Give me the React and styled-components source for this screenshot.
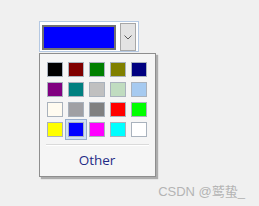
import styled, { createGlobalStyle } from 'styled-components';

const GlobalStyle = createGlobalStyle`
   html, body {
      margin: 0;
      padding: 0;
      background-color: #f0f0f0;
      font-family: 'Open Sans', 'Noto Sans', sans-serif;
   }
`;

const PageStyle = styled.div`
   position: relative;
   width: 259px;
   height: 206px;
   padding: 21px 0 0 39px;
   box-sizing: border-box;
`;

const ComboStyle = styled.div`
   width: 100px;
   height: 31px;
   box-sizing: border-box;
   border: 1px solid #b4c8e2;
   background-color: #ffffff;
   display: flex;
   align-items: center;
   padding: 1px 2px 0 2px;
   gap: 4px;
`;

const ComboSwatchStyle = styled.div`
   width: 75px;
   height: 25px;
   box-sizing: border-box;
   border: 2px solid #727272;
   background-color: ${(props) => props.$color};
`;

const ComboButtonStyle = styled.div`
   width: 16px;
   height: 28px;
   box-sizing: border-box;
   border: 1px solid #a7a7a7;
   background-color: #e3e3e3;
   display: flex;
   align-items: center;
   justify-content: center;
`;

const PopupStyle = styled.div`
   margin-top: 1px;
   width: 117px;
   height: 124px;
   box-sizing: border-box;
   border: 1px solid #8e8e8e;
   background-color: #f5f5f5;
   box-shadow: 2px 2px 1px rgba(0, 0, 0, 0.28);
   padding: 8px 8px 0 7px;
   display: flex;
   flex-direction: column;
`;

const GridStyle = styled.div`
   display: grid;
   grid-template-columns: repeat(5, 16px);
   grid-auto-rows: 15px;
   column-gap: 5px;
   row-gap: 5px;
`;

const CellStyle = styled.div`
   width: 16px;
   height: 15px;
   box-sizing: border-box;
   border: 1px solid #a9b2bd;
   background-color: ${(props) => props.$color};
   ${(props) =>
      props.$selected &&
      `box-shadow: 0 0 0 2px #cfe0f4, 0 0 0 3px #98aecb;`}
`;

const SeparatorStyle = styled.div`
   margin: 7px -2px 0 -1px;
   height: 1px;
   background-color: #dadada;
   border-bottom: 1px solid #ffffff;
`;

const OtherStyle = styled.div`
   flex: 1;
   display: flex;
   align-items: center;
   justify-content: center;
   font-size: 13.5px;
   color: #1f2b86;
   padding-bottom: 2px;
`;

const WatermarkStyle = styled.div`
   position: absolute;
   right: 14px;
   top: 181px;
   font-family: 'Liberation Sans', 'Noto Sans CJK SC', sans-serif;
   font-size: 13px;
   color: #b4b4b4;
`;

const colors = [
   '#000000', '#800000', '#008000', '#808000', '#000080',
   '#800080', '#008080', '#c0c0c0', '#c0dcc0', '#a6caf0',
   '#fffbf0', '#a0a0a4', '#808080', '#ff0000', '#00ff00',
   '#ffff00', '#0000ff', '#ff00ff', '#00ffff', '#ffffff',
];

function App() {
   return (
      <PageStyle>
         <GlobalStyle />
         <ComboStyle>
            <ComboSwatchStyle $color="#0000ff" />
            <ComboButtonStyle>
               <svg width="8" height="5" viewBox="0 0 8 5">
                  <path d="M0.5 0.5 L4 4 L7.5 0.5" fill="none" stroke="#5a5a5a" strokeWidth="1" />
               </svg>
            </ComboButtonStyle>
         </ComboStyle>
         <PopupStyle>
            <GridStyle>
               {colors.map((c, i) => (
                  <CellStyle key={i} $color={c} $selected={c === '#0000ff'} />
               ))}
            </GridStyle>
            <SeparatorStyle />
            <OtherStyle>Other</OtherStyle>
         </PopupStyle>
         <WatermarkStyle>CSDN @鹫蛰_</WatermarkStyle>
      </PageStyle>
   );
}

export default App;
